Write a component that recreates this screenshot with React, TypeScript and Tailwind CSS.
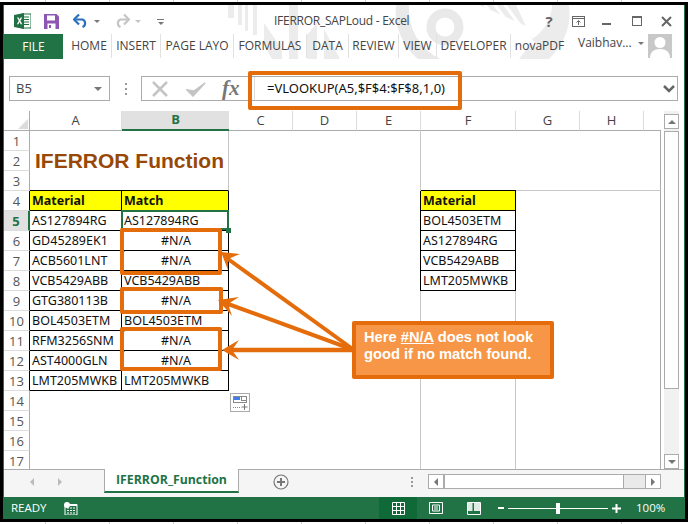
import React from "react";

const ui = "font-['Open_Sans','Noto_Sans',sans-serif]";
const cellFont = "font-['Noto_Sans','Open_Sans',sans-serif] text-[12.5px]";

const a = ["", "", "", "Material", "AS127894RG", "GD45289EK1", "ACB5601LNT", "VCB5429ABB", "GTG380113B", "BOL4503ETM", "RFM3256SNM", "AST4000GLN", "LMT205MWKB"];
const b = ["", "", "", "Match", "AS127894RG", "#N/A", "#N/A", "VCB5429ABB", "#N/A", "BOL4503ETM", "#N/A", "#N/A", "LMT205MWKB"];
const f: Record<number, string> = { 4: "Material", 5: "BOL4503ETM", 6: "AS127894RG", 7: "VCB5429ABB", 8: "LMT205MWKB" };

function Tab({ w, children, sep = true }: { w: string; children: React.ReactNode; sep?: boolean }) {
  return (
    <div className={`${w} h-[24px] flex items-center justify-center whitespace-nowrap ${sep ? "border-r border-[#e1e1e1]" : ""}`}>
      {children}
    </div>
  );
}

function Sheet() {
  const rows = Array.from({ length: 17 }, (_, i) => i + 1);
  return (
    <div className="grid grid-cols-[26px_92px_107px_64px_64px_64px_95px_64px_64px_17px] auto-rows-[20px] h-[338px] overflow-hidden">
      {rows.map((r) => {
        const idx = r - 1;
        const table = r >= 4 && r <= 13;
        const isHead = r === 4;
        const above = r === 3;
        const fTable = r >= 4 && r <= 8;
        const fAbove = r === 3;
        return (
          <React.Fragment key={r}>
            <div
              className={`${ui} flex items-center justify-center pt-[2px] text-[13px] border-b border-[#dcdcdc] ${
                r === 5 ? "bg-[#e1e1e1] text-[#217346] font-bold border-r-2 border-r-[#217346]" : `text-[#555] border-r ${table ? "border-r-black" : "border-r-[#ababab]"}`
              }`}
            >
              {r}
            </div>
            <div
              className={`${cellFont} relative flex items-center pl-[2px] pt-[2px] text-[#111] whitespace-nowrap ${isHead ? "bg-[#ffff00] font-bold" : ""} ${
                table ? "border-r border-b border-black" : above ? "border-b border-black" : ""
              }`}
            >
              {r === 2 ? (
                <span className="font-['Liberation_Sans',sans-serif] font-bold text-[21px] text-[#984806] pl-[3px] mt-[-4px] leading-none">IFERROR Function</span>
              ) : (
                a[idx] || ""
              )}
            </div>
            <div
              className={`${cellFont} relative flex items-center pl-[2px] pt-[2px] text-[#111] whitespace-nowrap ${isHead ? "bg-[#ffff00] font-bold" : ""} ${
                b[idx] === "#N/A" ? "justify-center pl-0" : ""
              } ${table ? "border-r border-b border-black" : above ? "border-b border-r border-b-black border-r-[#c8c8c8]" : r < 3 ? "border-r border-[#c8c8c8]" : ""}`}
            >
              {b[idx] === "#N/A" && r !== 9 && (
                <span className="absolute left-[-1px] top-0 w-0 h-0 border-t-[4px] border-r-[4px] border-t-[#217346] border-r-transparent" />
              )}
              {b[idx] || ""}
            </div>
            <div />
            <div />
            <div className={fTable ? "border-r border-black" : "border-r border-[#c8c8c8]"} />
            <div
              className={`${cellFont} flex items-center pl-[2px] pt-[2px] text-[#111] whitespace-nowrap ${r === 4 ? "bg-[#ffff00] font-bold" : ""} ${
                fTable ? "border-r border-b border-black" : fAbove ? "border-b border-black" : r > 8 ? "border-r border-[#c8c8c8]" : ""
              }`}
            >
              {f[r] || ""}
            </div>
            <div className={r === 3 ? "border-b border-[#c8c8c8]" : ""} />
            <div className={r === 3 ? "border-b border-[#c8c8c8]" : ""} />
            <div className={`border-r border-[#ababab] ${r === 3 ? "border-b border-b-[#c8c8c8]" : ""}`} />
          </React.Fragment>
        );
      })}
    </div>
  );
}

function ColHead() {
  const cols: [string, string][] = [
    ["A", "w-[92px]"], ["B", "w-[107px]"], ["C", "w-[64px]"], ["D", "w-[64px]"], ["E", "w-[64px]"], ["F", "w-[95px]"], ["G", "w-[64px]"], ["H", "w-[64px]"],
  ];
  return (
    <div className={`${ui} h-[20px] flex text-[13px] text-[#444]`}>
      <div className="w-[26px] h-[20px] border-r border-b border-[#ababab] relative overflow-hidden">
        <span className="absolute right-[1px] bottom-[1px] w-0 h-0 border-b-[10px] border-l-[10px] border-b-[#dcdcdc] border-l-transparent" />
      </div>
      {cols.map(([c, w]) => (
        <div
          key={c}
          className={`${w} flex items-center justify-center ${
            c === "B" ? "bg-[#e1e1e1] text-[#217346] font-bold border-b-2 border-[#217346]" : "border-r border-r-[#dcdcdc] border-b border-b-[#ababab]"
          }`}
        >
          {c}
        </div>
      ))}
      <div className="w-[17px] border-b border-[#ababab]" />
    </div>
  );
}

function Watermark() {
  return (
    <svg className="absolute left-0 top-0 pointer-events-none" width="680" height="54" viewBox="0 0 680 54">
      <g fill="#ececec">
        <rect x="224" y="0" width="6" height="13" />
        <rect x="234" y="0" width="4" height="20" />
        <rect x="241" y="0" width="3" height="26" />
        <rect x="249" y="0" width="4" height="30" />
        <path d="M285 0h9v54h-9z M303 30l10-12v36h-10z M260 18l18 26v10h-10l-8-14z" />
        <path d="M320 24l16 30h-16z" />
      </g>
      <circle cx="441" cy="22" r="14" fill="none" stroke="#e9e9e9" strokeWidth="9" />
      <path d="M405 0h-13a62 62 0 0 0 22 54h22a55 55 0 0 1-31-54z" fill="#e9e9e9" />
      <path d="M475 0h90a60 60 0 0 1-10 42a62 62 0 0 1-10 12h-30a55 55 0 0 0 14-30z" fill="#ececec" />
      <g stroke="#fff" strokeWidth="3">
        <path d="M478-4l34 46M488-4l34 46M498-4l34 46" />
      </g>
      <path d="M512 0h36a42 42 0 0 1-20 34z" fill="#fff" />
    </svg>
  );
}

export default function App() {
  return (
    <div className="w-[688px] h-[524px] bg-white overflow-hidden relative">
      <div className="h-[2px] flex pl-[45px] gap-[63px]">
        {Array.from({ length: 10 }).map((_, i) => <span key={i} className="w-px h-[2px] bg-[#d0d0d0]" />)}
      </div>
      <div className="h-[520px] border-t-[3px] border-b-[3px] border-l-[3px] border-r-[3px] border-black bg-white flex flex-col relative">
        <div className="flex-1 flex flex-col border-l border-r border-[#217346] min-h-0">
          {/* Title + tabs */}
          <div className="relative h-[53px]">
            <Watermark />
            <div className="relative h-[29px] flex items-center">
              <div className="pl-[10px] flex items-center w-[270px]">
                <svg width="17" height="16" viewBox="0 0 17 16" className="mt-[3px]">
                  <rect x="8" y="1" width="9" height="14" fill="#fff" stroke="#207245" />
                  <path d="M10 4h5M10 6.500h5M10 9h5M10 11.500h5" stroke="#207245" />
                  <path d="M0 2l10-2v16L0 14z" fill="#207245" />
                  <path d="M3 4.500h1.600l1 2 1-2H8.200L6.400 7.800l1.900 3.400H6.700L5.600 9 4.400 11.200H2.900L4.800 7.800z" fill="#fff" />
                </svg>
                <svg width="15" height="15" viewBox="0 0 15 15" className="ml-[13px] mt-[3px]">
                  <path d="M0 0h12.500L15 2.500V15H0z" fill="#8d56b3" />
                  <rect x="3" y="1.500" width="8" height="5" fill="#fff" />
                  <rect x="3.500" y="9.500" width="8" height="5.500" fill="#fff" />
                  <rect x="5" y="11" width="2" height="3" fill="#8d56b3" />
                </svg>
                <svg width="16" height="15" viewBox="0 0 16 15" className="ml-[14px] mt-[2px]">
                  <path d="M2.500 6.500h7a4 4 0 0 1 0 7.500" fill="none" stroke="#2a6fbd" strokeWidth="2.200" />
                  <path d="M6 1.500L1 6.500l5 5" fill="none" stroke="#2a6fbd" strokeWidth="2.200" />
                </svg>
                <span className="ml-[5px] mt-[3px] w-0 h-0 border-x-[3px] border-t-[3px] border-x-transparent border-t-[#777]" />
                <svg width="16" height="15" viewBox="0 0 16 15" className="ml-[14px] mt-[2px]">
                  <path d="M13.500 6.500h-7a4 4 0 0 0 0 7.500" fill="none" stroke="#c4c4c4" strokeWidth="2.200" />
                  <path d="M10 1.500l5 5-5 5" fill="none" stroke="#c4c4c4" strokeWidth="2.200" />
                </svg>
                <span className="ml-[5px] mt-[3px] w-0 h-0 border-x-[3px] border-t-[3px] border-x-transparent border-t-[#c4c4c4]" />
                <span className="ml-[16px] mt-[4px] flex flex-col items-center gap-[2px]">
                  <span className="w-[7px] h-px bg-[#777]" />
                  <span className="w-0 h-0 border-x-[3.5px] border-t-[3px] border-x-transparent border-t-[#777]" />
                </span>
              </div>
              <div className={`${ui} text-[12px] tracking-[-0.25px] text-[#444] mt-[3px] whitespace-nowrap w-[267px]`}>IFERROR_SAPLoud - Excel</div>
              <div className={`${ui} flex items-center text-[#666] mt-[3px]`}>
                <span className="w-[16px] text-center text-[15px] font-bold leading-none">?</span>
                <svg width="13" height="11" viewBox="0 0 13 11" className="ml-[15px]">
                  <rect x=".5" y=".5" width="12" height="10" fill="none" stroke="#666" />
                  <path d="M0 2.500h13" stroke="#666" />
                  <path d="M6.500 9V5M4.500 6.500l2-2 2 2" stroke="#666" fill="none" />
                </svg>
                <span className="ml-[17px] w-[9px] h-[2px] bg-[#666] mt-[5px]" />
                <span className="ml-[21px] w-[10px] h-[10px] border border-[#666] border-t-2" />
                <svg width="11" height="11" viewBox="0 0 11 11" className="ml-[19px]">
                  <path d="M1 1l9 9M10 1l-9 9" stroke="#666" strokeWidth="2" />
                </svg>
              </div>
            </div>
            <div className={`${ui} relative h-[24px] flex text-[12px] text-[#444]`}>
              <div className="w-[59px] h-[25px] bg-[#217346] text-white flex items-center justify-center">FILE</div>
              <Tab w="w-[49px] pl-[4px]">HOME</Tab>
              <Tab w="w-[49px]">INSERT</Tab>
              <Tab w="w-[73px]">PAGE LAYO</Tab>
              <Tab w="w-[73px]">FORMULAS</Tab>
              <Tab w="w-[42px]">DATA</Tab>
              <Tab w="w-[50px]">REVIEW</Tab>
              <Tab w="w-[38px]">VIEW</Tab>
              <Tab w="w-[74px]">DEVELOPER</Tab>
              <Tab w="w-[57px]" sep={false}>novaPDF</Tab>
              <div className="ml-[10px] mt-[-3px] h-[24px] flex items-center whitespace-nowrap w-[60px]">Vaibhav...</div>
              <span className="w-0 h-0 mt-[8px] border-x-[3px] border-t-[3px] border-x-transparent border-t-[#777]" />
              <svg width="24" height="24" viewBox="0 0 24 24" className="ml-[4px]">
                <rect width="24" height="24" fill="#c8c8c8" />
                <circle cx="12" cy="8.500" r="5.500" fill="#fff" />
                <path d="M2 24c0-6 4-9 10-9s10 3 10 9z" fill="#fff" />
              </svg>
            </div>
          </div>

          {/* Formula bar */}
          <div className="h-[18px] bg-white" />
          <div className="h-[25px] flex items-stretch pl-[5px] pr-[6px]">
            <div className={`${ui} w-[101px] border border-[#ababab] flex items-center justify-between pl-[6px] pr-[7px] text-[13px] text-[#444]`}>
              B5
              <span className="w-0 h-0 border-x-[4px] border-t-[4px] border-x-transparent border-t-[#777]" />
            </div>
            <div className="w-[31px] flex flex-col items-center justify-center gap-[3px]">
              <span className="w-[2px] h-[2px] bg-[#999]" />
              <span className="w-[2px] h-[2px] bg-[#999]" />
              <span className="w-[2px] h-[2px] bg-[#999]" />
            </div>
            <div className="flex-1 border border-[#ababab] flex items-center relative">
              <div className="w-[113px] h-full flex items-center border-r border-[#dcdcdc]">
                <svg width="18" height="18" viewBox="0 0 18 18" className="ml-[9px]">
                  <path d="M2 2l14 14M16 2L2 16" stroke="#c4c4c4" strokeWidth="2.500" />
                </svg>
                <svg width="20" height="16" viewBox="0 0 20 16" className="ml-[17px]">
                  <path d="M1 9l6 6L19 2l-11 8z" fill="#c4c4c4" stroke="#c4c4c4" strokeWidth="1.500" />
                </svg>
                <span className="ml-[16px] font-['Liberation_Serif',serif] italic font-bold text-[21px] leading-none text-[#777]">fx</span>
              </div>
              <div className="font-['Noto_Sans','Open_Sans',sans-serif] text-[13px] pl-[12px] text-[#111] whitespace-nowrap">=VLOOKUP(A5,$F$4:$F$8,1,0)</div>
              <svg width="12" height="8" viewBox="0 0 12 8" className="absolute right-[2px] top-[8px]">
                <path d="M1 1l5 5 5-5" fill="none" stroke="#666" strokeWidth="2.500" />
              </svg>
            </div>
          </div>
          <div className="h-[10px]" />

          {/* Sheet + scrollbar */}
          <div className="flex h-[358px] overflow-hidden">
            <div className="w-[657px]">
              <ColHead />
              <Sheet />
            </div>
            <div className="w-[3px]" />
            <div className="w-[15px] bg-[#f1f1f1] flex flex-col pt-[3px]">
              <div className="w-[15px] h-[15px] bg-white border border-[#ababab] flex items-center justify-center">
                <span className="w-0 h-0 border-x-[4px] border-b-[4px] border-x-transparent border-b-[#777]" />
              </div>
              <div className="w-[15px] h-[258px] mt-[2px] bg-white border border-[#ababab]" />
              <div className="flex-1" />
              <div className="w-[15px] h-[15px] bg-white border border-[#ababab] flex items-center justify-center">
                <span className="w-0 h-0 border-x-[4px] border-t-[4px] border-x-transparent border-t-[#777]" />
              </div>
            </div>
          </div>

          {/* Sheet tabs */}
          <div className={`${ui} h-[24px] flex bg-[#f5f5f5] border-t border-[#ababab]`}>
            <div className="w-[100px] flex items-center pl-[26px] gap-[24px]">
              <span className="w-0 h-0 border-y-[4px] border-r-[4px] border-y-transparent border-r-[#bbb]" />
              <span className="w-0 h-0 border-y-[4px] border-l-[4px] border-y-transparent border-l-[#bbb]" />
            </div>
            <div className="w-[135px] h-[24px] mt-[-1px] bg-white border-x border-[#ababab] border-b-2 border-b-[#217346] text-[#217346] text-[12.3px] font-bold flex items-center justify-center">
              IFERROR_Function
            </div>
            <div className="w-[80px] flex items-center pl-[34px]">
              <svg width="16" height="16" viewBox="0 0 16 16">
                <circle cx="8" cy="8" r="7" fill="none" stroke="#777" strokeWidth="1.200" />
                <path d="M8 4v8M4 8h8" stroke="#777" strokeWidth="2" />
              </svg>
            </div>
            <div className="flex-1 flex items-center justify-end pr-[23px]">
              <div className="mr-[15px] flex flex-col gap-[2px]">
                <span className="w-[2px] h-[2px] bg-[#999]" />
                <span className="w-[2px] h-[2px] bg-[#999]" />
                <span className="w-[2px] h-[2px] bg-[#999]" />
              </div>
              <div className="w-[233px] h-[15px] flex border border-[#ababab] bg-[#eaeaea]">
                <div className="w-[15px] border-r border-[#ababab] bg-white flex items-center justify-center">
                  <span className="w-0 h-0 border-y-[4px] border-r-[4px] border-y-transparent border-r-[#777]" />
                </div>
                <div className="w-[180px] bg-white border-r border-l border-[#ababab]" />
                <div className="flex-1" />
                <div className="w-[15px] border-l border-[#ababab] bg-white flex items-center justify-center">
                  <span className="w-0 h-0 border-y-[4px] border-l-[4px] border-y-transparent border-l-[#777]" />
                </div>
              </div>
            </div>
          </div>
          <div className="h-[4px] bg-[#f5f5f5]" />

          {/* Status bar */}
          <div className={`${ui} h-[22px] bg-[#217346] text-white text-[11.5px] flex items-center relative`}>
            <span className="ml-[7px] w-[50px]">READY</span>
            <svg width="14" height="13" viewBox="0 0 14 13" className="ml-[3px]">
              <circle cx="3" cy="3" r="3" fill="#fff" />
              <rect x="1" y="3" width="12" height="10" fill="none" stroke="#fff" />
              <path d="M5 2h8v2H5z" fill="#fff" />
              <path d="M3 6h9M3 8.500h9M3 11h9" stroke="#fff" strokeDasharray="2 1" />
            </svg>
            <div className="ml-auto flex items-center h-full">
              <div className="w-[38px] h-full bg-[#0f6a37] flex items-center justify-center">
                <svg width="13" height="13" viewBox="0 0 13 13">
                  <path d="M.5.500h12v12H.500zM4.500 0v13M8.500 0v13M0 4.500h13M0 8.500h13" fill="none" stroke="#fff" />
                </svg>
              </div>
              <svg width="14" height="12" viewBox="0 0 14 12" className="ml-[12px]">
                <path d="M.5.500h13v11H.500z M3.500 3h7v6h-7z M5 5h4M5 7h4" fill="none" stroke="#fff" />
              </svg>
              <svg width="14" height="13" viewBox="0 0 14 13" className="ml-[24px]">
                <path d="M.5.500h13v12H.500z" fill="none" stroke="#fff" />
                <path d="M1 1h4.500v8H1zM7 1h6v8H7z" fill="#fff" opacity=".85" />
              </svg>
              <span className="ml-[17px] w-[6px] h-[2px] bg-white" />
              <div className="ml-[4px] w-[100px] h-px bg-white relative">
                <span className="absolute left-[48px] top-[-5px] w-[4px] h-[11px] bg-white" />
              </div>
              <svg width="9" height="9" viewBox="0 0 9 9" className="ml-[4px]">
                <path d="M4.500 0v9M0 4.500h9" stroke="#fff" strokeWidth="2" />
              </svg>
              <span className="ml-[15px] mr-[20px] w-[28px]">100%</span>
            </div>
          </div>
        </div>
      </div>

      {/* Annotations */}
      <div className="absolute left-[121px] top-[210px] w-[108px] h-[20px] border-2 border-[#217346]" />
      <div className="absolute left-[120px] top-[228px] w-[102px] h-[47px] border-[4px] border-[#e46c0a] rounded-[2px]" />
      <div className="absolute left-[226px] top-[228px] w-[5px] h-[5px] bg-[#217346]" />
      <div className="absolute left-[120px] top-[287px] w-[103px] h-[27px] border-[4px] border-[#e46c0a] rounded-[2px]" />
      <div className="absolute left-[120px] top-[327px] w-[102px] h-[44px] border-[4px] border-[#e46c0a] rounded-[2px]" />
      <div className="absolute left-[248px] top-[71px] w-[214px] h-[39px] border-[4px] border-[#e46c0a] rounded-[2px]" />
      <svg className="absolute left-[210px] top-[245px]" width="150" height="120" viewBox="210 245 150 120">
        <g stroke="#e46c0a" strokeWidth="4">
          <line x1="354" y1="350" x2="228" y2="259" />
          <line x1="354" y1="350" x2="228" y2="304" />
          <line x1="354" y1="350" x2="232" y2="350" strokeWidth="4.500" />
        </g>
        <g fill="#e46c0a">
          <path d="M221 252L240 254L228 259L228 270z" />
          <path d="M218 300L239 297L228 304L232 316z" />
          <path d="M222 350L239 340L232 350L239 360z" />
        </g>
      </svg>
      <div className="absolute left-[352px] top-[321px] w-[202px] h-[58px] bg-[#f79646] border-[4px] border-[#e46c0a] rounded-[2px] pl-[8px] pt-[4px] text-white font-bold font-['Liberation_Sans',sans-serif] text-[14.7px] leading-[17px]">
        Here <span className="underline">#N/A</span> does not look good if no match found.
      </div>
      <svg className="absolute left-[230px] top-[393px]" width="20" height="19" viewBox="0 0 20 19">
        <rect x=".5" y=".5" width="19" height="18" fill="#fff" stroke="#ababab" />
        <rect x="3" y="3" width="7" height="4" fill="#3f7ee8" />
        <rect x="11.500" y="3.500" width="5" height="4" fill="#fff" stroke="#888" />
        <rect x="3.500" y="3.500" width="13" height="6" fill="none" stroke="#888" />
        <path d="M3 14.500h7" stroke="#888" strokeDasharray="1 1" />
        <path d="M14.500 11v6M11.500 14h6" stroke="#777" />
      </svg>

      <div className="absolute left-0 bottom-0 h-[2px] w-full flex pl-[45px] gap-[63px]">
        {Array.from({ length: 10 }).map((_, i) => <span key={i} className="w-px h-[2px] bg-[#d0d0d0]" />)}
      </div>
    </div>
  );
}
